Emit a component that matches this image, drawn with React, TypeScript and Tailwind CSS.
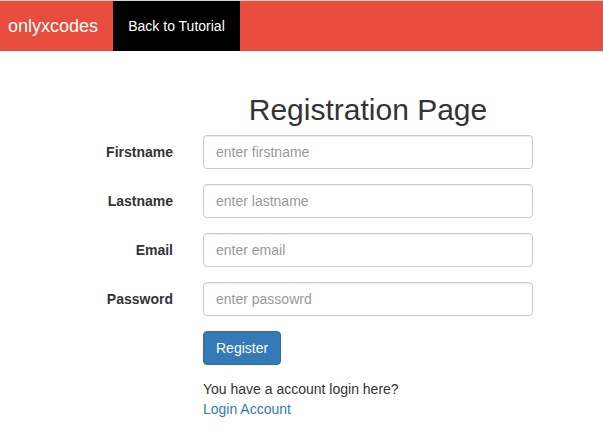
const fields = [
    { label: 'Firstname', placeholder: 'enter firstname', type: 'text' },
    { label: 'Lastname', placeholder: 'enter lastname', type: 'text' },
    { label: 'Email', placeholder: 'enter email', type: 'email' },
    { label: 'Password', placeholder: 'enter passowrd', type: 'password' },
];

const App: React.FC = () => {
    return (
        <div className="min-h-screen bg-white text-[14px] leading-[20px] text-[#333] font-['Liberation_Sans',Arial,sans-serif] border-t border-[#d4d4d4]">
            {/* navbar */}
            <nav className="flex h-[50px] bg-[#e74c3c]">
                <a href="#" className="flex items-center w-[113px] pl-[8px] text-[18px] text-white">
                    onlyxcodes
                </a>
                <a href="#" className="flex items-center justify-center w-[127px] bg-black text-white">
                    Back to Tutorial
                </a>
            </nav>

            <div className="pt-[42px]">
                <div className="pl-[203px] w-[533px] text-center">
                    <h2 className="text-[30px] leading-[33px] font-normal text-[#333]">Registration Page</h2>
                </div>

                <form className="mt-[9px]" onSubmit={e => e.preventDefault()}>
                    {fields.map(field => (
                        <div key={field.label} className="flex mb-[15px]">
                            <label className="w-[173px] pt-[7px] text-right font-bold">
                                {field.label}
                            </label>
                            <div className="ml-[30px]">
                                <input
                                    type={field.type}
                                    placeholder={field.placeholder}
                                    className="block w-[330px] h-[34px] px-[12px] py-[6px] border border-[#ccc] rounded-[4px] bg-white text-[14px] text-[#555] placeholder:text-[#999] shadow-[inset_0_1px_1px_rgba(0,0,0,0.075)] outline-none"
                                />
                            </div>
                        </div>
                    ))}

                    <div className="pl-[203px] mb-[14px]">
                        <button
                            type="submit"
                            className="h-[34px] px-[12px] bg-[#337ab7] border border-[#2e6da4] rounded-[4px] text-white cursor-pointer"
                        >
                            Register
                        </button>
                    </div>

                    <div className="pl-[203px]">
                        <p>You have a account login here?</p>
                        <a href="#" className="text-[#337ab7]">Login Account</a>
                    </div>
                </form>
            </div>
        </div>
    );
};

export default App;
